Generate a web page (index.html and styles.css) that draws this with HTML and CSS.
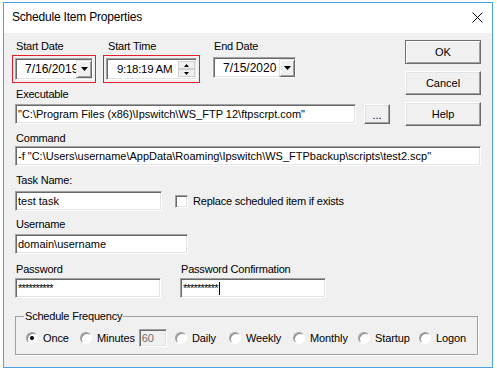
FILE: index.html
```html
<!DOCTYPE html>
<html lang="en">
<head>
<meta charset="utf-8">
<title>Schedule Item Properties</title>
<link rel="stylesheet" href="styles.css">
</head>
<body>
<div class="window">
  <div class="titlebar">
    <span class="title">Schedule Item Properties</span>
    <svg class="close" width="11" height="11" viewBox="0 0 11 11"><path d="M0.5 0.5L10.5 10.5M10.5 0.5L0.5 10.5" stroke="#000" stroke-width="1" fill="none"/></svg>
  </div>
  <div class="content">
    <div class="top">
      <div class="left">
        <div class="dates">
          <div class="f-start">
            <div class="label">Start Date</div>
            <div class="focus">
              <div class="combo combo-start">
                <span class="ctext">7/16/2019</span>
                <span class="ddbtn"><svg width="7" height="4" viewBox="0 0 7 4"><path d="M0 0H7L3.5 4Z" fill="#000"/></svg></span>
              </div>
            </div>
          </div>
          <div class="f-time">
            <div class="label">Start Time</div>
            <div class="focus">
              <div class="combo time">
                <span class="ctext ttext">9:18:19 AM</span>
                <span class="spin">
                  <span class="spin-btn"><svg width="5" height="3" viewBox="0 0 5 3"><path d="M0 3H5L2.5 0Z" fill="#000"/></svg></span>
                  <span class="spin-btn"><svg width="5" height="3" viewBox="0 0 5 3"><path d="M0 0H5L2.5 3Z" fill="#000"/></svg></span>
                </span>
              </div>
            </div>
          </div>
          <div class="f-end">
            <div class="label">End Date</div>
            <div class="combo combo-end">
              <span class="ctext">7/15/2020</span>
              <span class="ddbtn"><svg width="7" height="4" viewBox="0 0 7 4"><path d="M0 0H7L3.5 4Z" fill="#000"/></svg></span>
            </div>
          </div>
        </div>
        <div class="label exe-label">Executable</div>
        <div class="exe-row">
          <div class="edit exe">"C:\Program Files (x86)\Ipswitch\WS_FTP 12\ftpscrpt.com"</div>
          <div class="btn browse">...</div>
        </div>
      </div>
      <div class="buttons">
        <div class="btn default">OK</div>
        <div class="btn">Cancel</div>
        <div class="btn">Help</div>
      </div>
    </div>
    <div class="label cmd-label">Command</div>
    <div class="edit cmd">-f "C:\Users\username\AppData\Roaming\Ipswitch\WS_FTPbackup\scripts\test2.scp"</div>
    <div class="label task-label">Task Name:</div>
    <div class="task-row">
      <div class="edit task">test task</div>
      <span class="check"></span>
      <span class="check-label">Replace scheduled item if exists</span>
    </div>
    <div class="label user-label">Username</div>
    <div class="edit user">domain\username</div>
    <div class="pw-row">
      <div class="pw-field">
        <div class="label">Password</div>
        <div class="edit pw"><span class="stars">**********</span></div>
      </div>
      <div class="pw-field">
        <div class="label">Password Confirmation</div>
        <div class="edit pw"><span class="stars">**********</span><span class="caret"></span></div>
      </div>
    </div>
    <fieldset class="group">
      <legend>Schedule Frequency</legend>
      <div class="radios">
        <div class="ropt"><span class="radio checked"><span class="dot"></span></span>Once</div>
        <div class="ropt"><span class="radio"></span>Minutes<span class="num">60</span></div>
        <div class="ropt"><span class="radio"></span>Daily</div>
        <div class="ropt"><span class="radio"></span>Weekly</div>
        <div class="ropt"><span class="radio"></span>Monthly</div>
        <div class="ropt"><span class="radio"></span>Startup</div>
        <div class="ropt"><span class="radio"></span>Logon</div>
      </div>
    </fieldset>
  </div>
</div>
</body>
</html>
```
FILE: styles.css
```css
* { box-sizing: border-box; }
html, body { margin: 0; padding: 0; background: #ffffff; }
body {
  font-family: "Liberation Sans", Arial, sans-serif;
  font-size: 11px;
  color: #000;
}
.window {
  margin: 2px 0 0 3px;
  width: 490px;
  height: 366px;
  border: 1px solid #4ba2dc;
  background: #f0f0f0;
  overflow: hidden;
}
.titlebar {
  height: 30px;
  background: #fff;
  display: flex;
  justify-content: space-between;
  align-items: flex-start;
  padding: 7px 9px 0 8px;
}
.title { font-size: 12px; line-height: 14px; letter-spacing: -0.2px; }
.close { margin-top: 2px; display: block; }

.content { padding: 7px 11px 0 11px; }
.top { display: flex; justify-content: space-between; align-items: flex-start; }
.left { display: flex; flex-direction: column; }
.label { line-height: 13px; margin-left: 1px; white-space: nowrap; letter-spacing: -0.2px; }

.dates { display: flex; margin-left: -3px; }
.f-start .label { margin-left: 4px; }
.f-time { margin-left: 7px; }
.f-time .label { margin-left: 5px; }
.f-end { margin-left: 13px; }
.focus { margin-top: 2px; border: 1px solid #e0202c; padding: 2px; }

.combo {
  display: flex;
  align-items: center;
  height: 22px;
  background: #fff;
  border: 1px solid;
  border-color: #a0a0a0 #fff #fff #a0a0a0;
  box-shadow: inset 1px 1px 0 #696969, inset -1px -1px 0 #e3e3e3;
  padding: 0;
}
.combo-start { width: 78px; }
.combo-end { width: 83px; height: 21px; margin-top: 4px; }
.time { width: 91px; }
.ctext {
  flex: 1;
  overflow: hidden;
  white-space: nowrap;
  font-size: 12px;
  line-height: 16px;
  padding-left: 9px;
}
.ttext { font-size: 11.5px; letter-spacing: -0.3px; padding-left: 10px; }
.ddbtn {
  width: 16px;
  height: 18px;
  display: flex;
  align-items: center;
  justify-content: center;
  background: #f0f0f0;
  border: 1px solid;
  border-color: #e3e3e3 #696969 #696969 #e3e3e3;
  box-shadow: inset 1px 1px 0 #fff, inset -1px -1px 0 #a0a0a0;
}
.ddbtn svg { display: block; }
.spin {
  display: flex;
  flex-direction: column;
  width: 17px;
  margin-right: 1px;
}
.spin-btn {
  height: 8px;
  display: flex;
  align-items: center;
  justify-content: center;
  background: #f0f0f0;
  border: 1px solid #d0d0d0;
}
.spin-btn svg { display: block; }

.exe-label { margin-top: 5px; }
.exe-row { display: flex; margin-top: 3px; }
.edit {
  height: 20px;
  background: #fff;
  border: 1px solid;
  border-color: #a0a0a0 #fff #fff #a0a0a0;
  box-shadow: inset 1px 1px 0 #696969, inset -1px -1px 0 #e3e3e3;
  padding: 0 2px;
  line-height: 18px;
  white-space: nowrap;
  overflow: hidden;
}
.exe { width: 341px; }
.btn {
  display: flex;
  align-items: center;
  justify-content: center;
  background: #f0f0f0;
  border: 1px solid;
  border-color: #fff #696969 #696969 #fff;
  box-shadow: inset -1px -1px 0 #a0a0a0, inset 1px 1px 0 #e3e3e3;
  height: 24px;
  width: 76px;
  line-height: 13px;
}
.browse { width: 26px; height: 20px; margin-left: 8px; padding-top: 3px; }
.buttons { display: flex; flex-direction: column; gap: 7px; }
.btn.default {
  border-color: #6e6e6e;
  box-shadow: inset 1px 1px 0 #fff, inset -1px -1px 0 #a0a0a0;
}

.cmd-label { margin-top: 6px; }
.cmd { margin-top: 1px; width: 466px; }
.task-label { margin-top: 8px; }
.task-row { display: flex; align-items: center; margin-top: 4px; }
.task { width: 147px; }
.check {
  width: 13px;
  height: 13px;
  margin-left: 13px;
  margin-right: 5px;
  background: #fff;
  border: 1px solid;
  border-color: #a0a0a0 #fff #fff #a0a0a0;
  box-shadow: inset 1px 1px 0 #696969, inset -1px -1px 0 #e3e3e3;
}
.check-label { white-space: nowrap; letter-spacing: -0.2px; }
.user-label { margin-top: 7px; }
.user { margin-top: 3px; width: 173px; }
.pw-row { display: flex; gap: 19px; margin-top: 9px; }
.pw { width: 146px; margin-top: 2px; display: flex; align-items: center; }
.stars { letter-spacing: -0.8px; line-height: 18px; }
.caret { display: inline-block; width: 1px; height: 13px; background: #000; margin-left: 1px; }

.group {
  margin: 12px 0 0 0;
  width: 463px;
  padding: 6px 0 7px 8px;
  border: 1px solid #a0a0a0;
  box-shadow: 1px 1px 0 #fff;
  min-inline-size: 0;
}
.group legend { padding: 0 1px; line-height: 13px; letter-spacing: -0.2px; }
.radios {
  display: grid;
  grid-template-columns: 54px 95px 54px 64px 65px 61px auto;
  margin-left: 2px;
  height: 18px;
  align-items: center;
}
.ropt { display: flex; align-items: center; white-space: nowrap; height: 18px; letter-spacing: -0.1px; }
.radio {
  width: 12px;
  height: 12px;
  border-radius: 50%;
  margin-right: 5px;
  background: #fff;
  border: 1px solid;
  border-color: #a0a0a0 #fff #fff #a0a0a0;
  box-shadow: inset 1px 1px 0 #8a8a8a;
  display: flex;
  align-items: center;
  justify-content: center;
}
.dot { width: 4px; height: 4px; border-radius: 50%; background: #000; }
.num {
  width: 28px;
  height: 18px;
  margin-left: 4px;
  background: #f0f0f0;
  color: #6d6d6d;
  border: 1px solid;
  border-color: #a0a0a0 #fff #fff #a0a0a0;
  box-shadow: inset 1px 1px 0 #696969, inset -1px -1px 0 #e3e3e3;
  padding-left: 2px;
  line-height: 16px;
}
```
